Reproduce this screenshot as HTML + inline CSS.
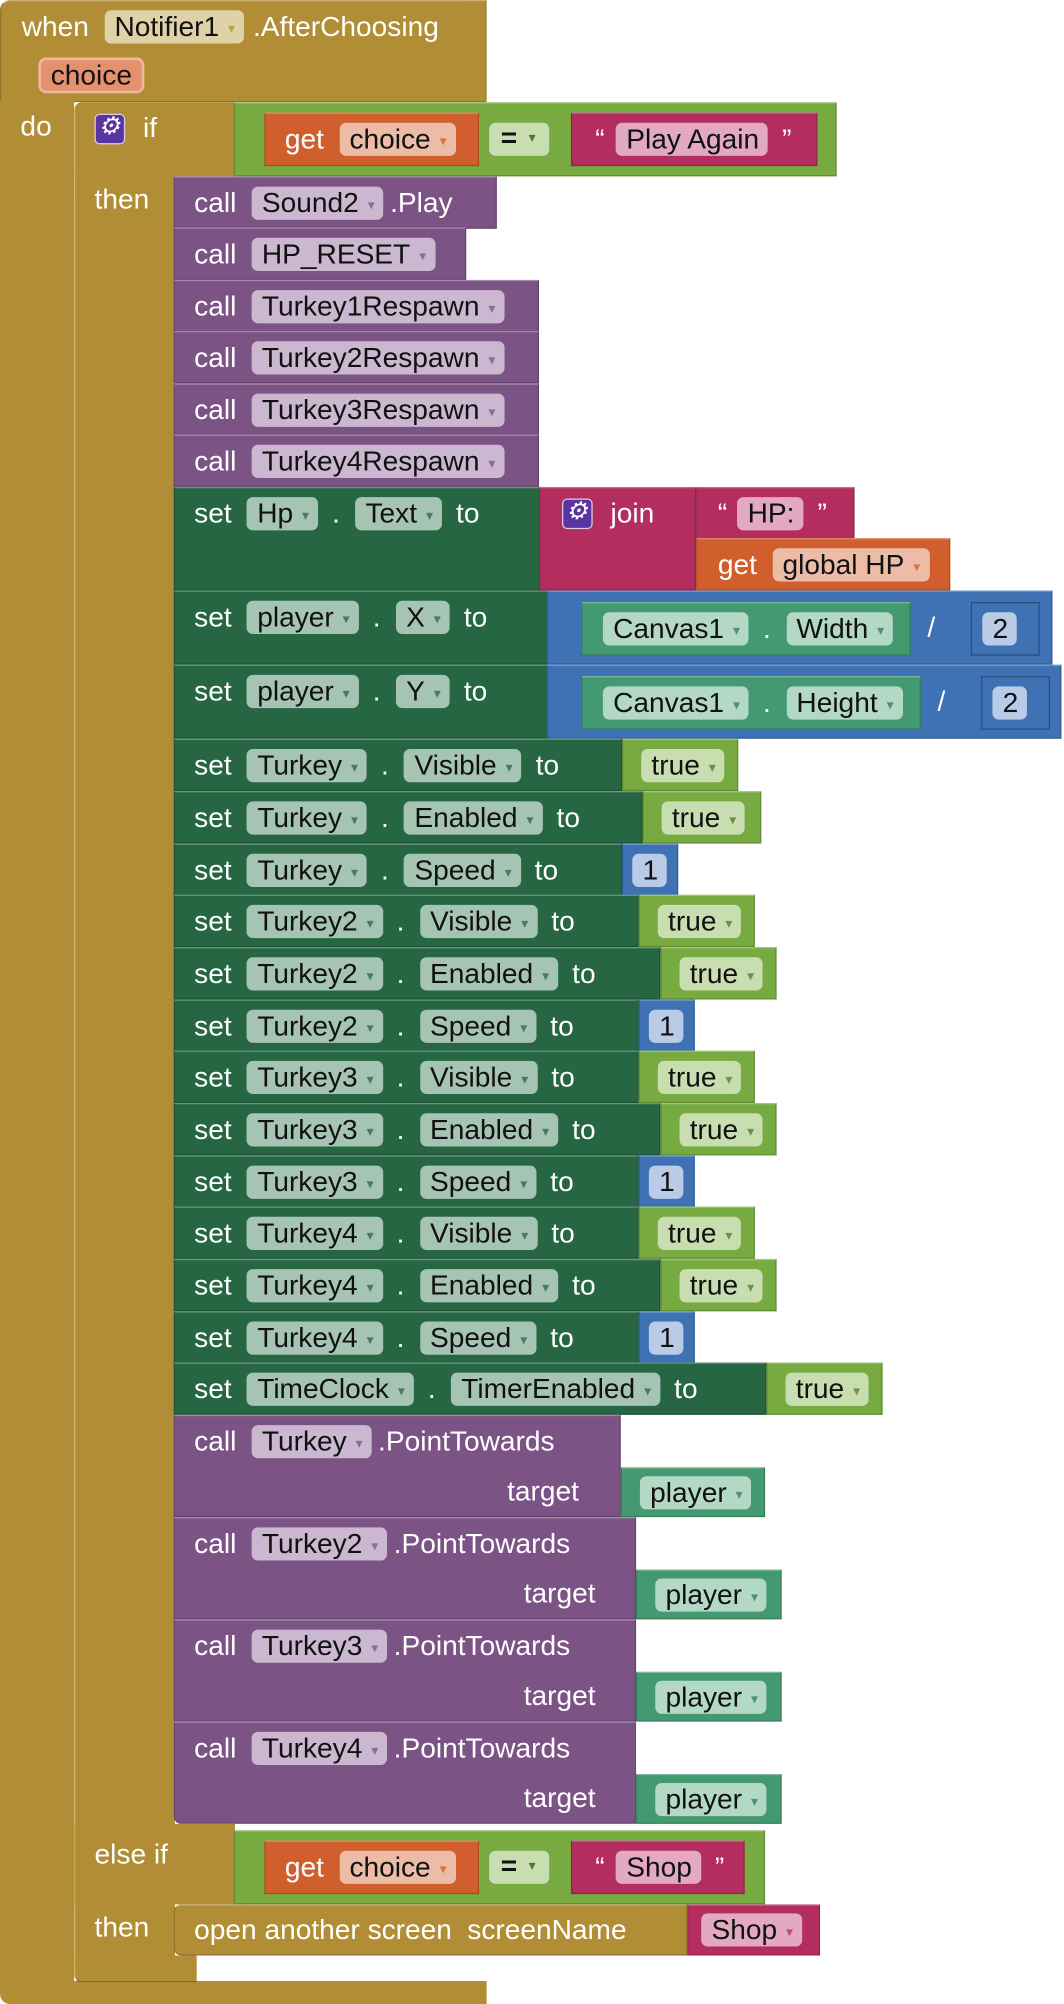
<!DOCTYPE html>
<html><head><meta charset="utf-8">
<style>
html,body{margin:0;padding:0;background:#fff;overflow:hidden}
#w{position:absolute;left:0;top:0;width:833px;height:1568px;transform:scale(1.2773,1.2781);transform-origin:0 0}
.b{position:absolute;display:flex;align-items:flex-start;box-sizing:border-box;padding-left:15px;padding-top:7px;color:#fff;font:22px/26px "Liberation Sans",sans-serif;white-space:nowrap;border:1px solid rgba(0,0,0,.18);border-top-color:rgba(255,255,255,.3)}
.b>span{margin-right:12px}
.f{font-style:normal;display:inline-block;height:26px;line-height:26px;padding:0 7px 0 8px;border-radius:5px;background:rgba(255,255,255,.6);color:#111;margin-right:11px}
.f u{text-decoration:none;font-size:11px;margin-left:7px;vertical-align:2px;opacity:.75}
.s{background:#266643}.s .f{background:#a6c4b3}.s .f u{color:#266643}
.c{background:#7c5385}.c .f{background:#cbb7cf}.c .f u{color:#7c5385}
.lg{background:#77ab41}.lg .f{background:#c8deb0}.lg .f u{color:#4c7a20}
.tx{background:#b32d5e}
.gt{background:#d05f2d}.gt .f{background:#ecbca6}.gt .f u{color:#d05f2d}
.bl{background:#3f71b5}
.tl{background:#439970}.tl .f{background:#b3d8c5}.tl .f u{color:#2f7a55}
.gd{background:#b18e35}
.st{left:136px;height:41px}
.gear{display:inline-block;width:24px;height:24px;background:#5b34a4;border:1px solid #d8cde8;border-radius:4px;box-sizing:border-box;margin-right:14px;position:relative;margin-top:1px}
.gear:after{content:"⚙";position:absolute;left:2px;top:-1px;font-size:19px;line-height:22px;color:#fff}
.lbl{position:absolute;color:#fff;font:22px/26px 'Liberation Sans',sans-serif}
</style></head><body><div id="w">

<div class="b gd" style="left:0;top:0;width:381px;height:80px;border-radius:8px 0 0 0;padding-left:16px;padding-top:7px"><span>when</span><i class="f" style="background:#e0d2a7">Notifier1<u style="color:#b18e35">▾</u></i><span style="margin-left:-4px">.AfterChoosing</span></div>
<div style="position:absolute;left:30px;top:45px;width:83px;height:28px;box-sizing:border-box;background:#e5916f;border:2px solid #efb89c;border-radius:6px;font:22px/24px 'Liberation Sans',sans-serif;color:#111;text-align:center">choice</div>
<div class="gd" style="position:absolute;left:0;top:79px;width:58px;height:1480px;border-radius:0 0 0 8px"></div>
<div class="gd" style="position:absolute;left:0;top:1550px;width:381px;height:18px;border-radius:0 0 0 8px"></div>
<div class="lbl" style="left:16px;top:86px">do</div>

<div class="gd" style="position:absolute;left:58px;top:80px;width:125px;height:58px;border-left:1px solid #c9a95a;border-radius:6px 0 0 0"></div>
<div class="gd" style="position:absolute;left:58px;top:137px;width:78px;height:1410px;border-left:1px solid #c9a95a;border-radius:0 0 0 6px"></div>
<div class="gd" style="position:absolute;left:58px;top:1427px;width:125px;height:63px;border-left:1px solid #c9a95a"></div>
<div class="gd" style="position:absolute;left:58px;top:1530px;width:95px;height:20px;border-left:1px solid #c9a95a;border-bottom:1px solid #8c6d20;border-radius:0 0 0 6px"></div>
<div style="position:absolute;left:74px;top:87px;display:flex;align-items:center;color:#fff;font:22px/26px 'Liberation Sans',sans-serif"><i class="gear"></i>if</div>
<div class="lbl" style="left:74px;top:143px">then</div>
<div class="lbl" style="left:74px;top:1438px">else if</div>
<div class="lbl" style="left:74px;top:1495px">then</div>

<div class="b lg" style="left:183px;top:80px;width:472px;height:58px"></div>
<div class="b gt" style="left:207px;top:88px;width:168px;height:42px;padding-top:7px"><span>get</span><i class="f">choice<u>▾</u></i></div>
<div class="b" style="left:383px;top:96px;width:47px;height:26px;border:0;padding:0 0 0 9px;background:#c8deb0;border-radius:5px;color:#111;font-weight:bold;line-height:24px">=<span style="font-size:11px;font-weight:normal;color:#4c7a20;margin-left:9px">▾</span></div>
<div class="b tx" style="left:447px;top:88px;width:193px;height:42px;padding-top:7px;padding-left:18px"><span style="margin-right:9px">“</span><i class="f" style="background:#e2a9c0">Play Again</i><span>”</span></div>

<div class="b c st" style="top:138px;width:253px"><span>call</span><i class="f">Sound2<u>▾</u></i><span style="margin-left:-6px">.Play</span></div>
<div class="b c st" style="top:178px;width:229px"><span>call</span><i class="f">HP_RESET<u>▾</u></i></div>
<div class="b c st" style="top:219px;width:286px"><span>call</span><i class="f">Turkey1Respawn<u>▾</u></i></div>
<div class="b c st" style="top:259px;width:286px"><span>call</span><i class="f">Turkey2Respawn<u>▾</u></i></div>
<div class="b c st" style="top:300px;width:286px"><span>call</span><i class="f">Turkey3Respawn<u>▾</u></i></div>
<div class="b c st" style="top:340px;width:286px"><span>call</span><i class="f">Turkey4Respawn<u>▾</u></i></div>

<div class="b s st" style="top:381px;width:288px;height:81px"><span>set</span><i class="f">Hp<u>▾</u></i><span>.</span><i class="f">Text<u>▾</u></i><span>to</span></div>
<div class="b tx" style="left:422px;top:381px;width:123px;height:81px;padding-left:17px;padding-top:7px"><i class="gear"></i><span>join</span></div>
<div class="b tx" style="left:545px;top:381px;width:124px;height:41px;padding-left:16px"><span style="margin-right:8px">“</span><i class="f" style="background:#e2a9c0">HP:</i><span>”</span></div>
<div class="b gt" style="left:545px;top:421px;width:199px;height:41px;padding-left:16px"><span>get</span><i class="f">global HP<u>▾</u></i></div>

<div class="b s st" style="top:462px;width:293px;height:58px"><span>set</span><i class="f">player<u>▾</u></i><span>.</span><i class="f">X<u>▾</u></i><span>to</span></div>
<div class="b bl" style="left:428px;top:462px;width:396px;height:58px"></div>
<div class="b tl" style="left:455px;top:471px;width:258px;height:42px;padding-left:16px;padding-top:7px"><i class="f">Canvas1<u>▾</u></i><span>.</span><i class="f">Width<u>▾</u></i></div>
<div class="lbl" style="left:726px;top:478px">/</div>
<div class="b bl" style="left:760px;top:471px;width:54px;height:42px;padding-left:8px;border-color:rgba(0,0,0,.3)"><i class="f" style="background:#b9cbe6">2</i></div>

<div class="b s st" style="top:520px;width:293px;height:58px"><span>set</span><i class="f">player<u>▾</u></i><span>.</span><i class="f">Y<u>▾</u></i><span>to</span></div>
<div class="b bl" style="left:428px;top:520px;width:403px;height:58px"></div>
<div class="b tl" style="left:455px;top:529px;width:266px;height:42px;padding-left:16px;padding-top:7px"><i class="f">Canvas1<u>▾</u></i><span>.</span><i class="f">Height<u>▾</u></i></div>
<div class="lbl" style="left:734px;top:536px">/</div>
<div class="b bl" style="left:768px;top:529px;width:54px;height:42px;padding-left:8px;border-color:rgba(0,0,0,.3)"><i class="f" style="background:#b9cbe6">2</i></div>

<div class="b s st" style="top:578px;width:351px"><span>set</span><i class="f">Turkey<u>▾</u></i><span>.</span><i class="f">Visible<u>▾</u></i><span>to</span></div>
<div class="b lg" style="left:487px;top:578px;width:91px;height:41px;padding-left:14px"><i class="f">true<u>▾</u></i></div>
<div class="b s st" style="top:619px;width:367px"><span>set</span><i class="f">Turkey<u>▾</u></i><span>.</span><i class="f">Enabled<u>▾</u></i><span>to</span></div>
<div class="b lg" style="left:503px;top:619px;width:93px;height:41px;padding-left:14px"><i class="f">true<u>▾</u></i></div>
<div class="b s st" style="top:660px;width:351px"><span>set</span><i class="f">Turkey<u>▾</u></i><span>.</span><i class="f">Speed<u>▾</u></i><span>to</span></div>
<div class="b bl" style="left:487px;top:660px;width:44px;height:41px;padding-left:7px"><i class="f" style="background:#b9cbe6">1</i></div>

<div class="b s st" style="top:700px;width:364px"><span>set</span><i class="f">Turkey2<u>▾</u></i><span>.</span><i class="f">Visible<u>▾</u></i><span>to</span></div>
<div class="b lg" style="left:500px;top:700px;width:91px;height:41px;padding-left:14px"><i class="f">true<u>▾</u></i></div>
<div class="b s st" style="top:741px;width:381px"><span>set</span><i class="f">Turkey2<u>▾</u></i><span>.</span><i class="f">Enabled<u>▾</u></i><span>to</span></div>
<div class="b lg" style="left:517px;top:741px;width:91px;height:41px;padding-left:14px"><i class="f">true<u>▾</u></i></div>
<div class="b s st" style="top:782px;width:364px"><span>set</span><i class="f">Turkey2<u>▾</u></i><span>.</span><i class="f">Speed<u>▾</u></i><span>to</span></div>
<div class="b bl" style="left:500px;top:782px;width:44px;height:41px;padding-left:7px"><i class="f" style="background:#b9cbe6">1</i></div>

<div class="b s st" style="top:822px;width:364px"><span>set</span><i class="f">Turkey3<u>▾</u></i><span>.</span><i class="f">Visible<u>▾</u></i><span>to</span></div>
<div class="b lg" style="left:500px;top:822px;width:91px;height:41px;padding-left:14px"><i class="f">true<u>▾</u></i></div>
<div class="b s st" style="top:863px;width:381px"><span>set</span><i class="f">Turkey3<u>▾</u></i><span>.</span><i class="f">Enabled<u>▾</u></i><span>to</span></div>
<div class="b lg" style="left:517px;top:863px;width:91px;height:41px;padding-left:14px"><i class="f">true<u>▾</u></i></div>
<div class="b s st" style="top:904px;width:364px"><span>set</span><i class="f">Turkey3<u>▾</u></i><span>.</span><i class="f">Speed<u>▾</u></i><span>to</span></div>
<div class="b bl" style="left:500px;top:904px;width:44px;height:41px;padding-left:7px"><i class="f" style="background:#b9cbe6">1</i></div>

<div class="b s st" style="top:944px;width:364px"><span>set</span><i class="f">Turkey4<u>▾</u></i><span>.</span><i class="f">Visible<u>▾</u></i><span>to</span></div>
<div class="b lg" style="left:500px;top:944px;width:91px;height:41px;padding-left:14px"><i class="f">true<u>▾</u></i></div>
<div class="b s st" style="top:985px;width:381px"><span>set</span><i class="f">Turkey4<u>▾</u></i><span>.</span><i class="f">Enabled<u>▾</u></i><span>to</span></div>
<div class="b lg" style="left:517px;top:985px;width:91px;height:41px;padding-left:14px"><i class="f">true<u>▾</u></i></div>
<div class="b s st" style="top:1026px;width:364px"><span>set</span><i class="f">Turkey4<u>▾</u></i><span>.</span><i class="f">Speed<u>▾</u></i><span>to</span></div>
<div class="b bl" style="left:500px;top:1026px;width:44px;height:41px;padding-left:7px"><i class="f" style="background:#b9cbe6">1</i></div>

<div class="b s st" style="top:1066px;width:464px"><span>set</span><i class="f">TimeClock<u>▾</u></i><span>.</span><i class="f">TimerEnabled<u>▾</u></i><span>to</span></div>
<div class="b lg" style="left:600px;top:1066px;width:91px;height:41px;padding-left:14px"><i class="f">true<u>▾</u></i></div>

<div class="b c st" style="top:1107px;width:350px;height:80px"><span>call</span><i class="f">Turkey<u>▾</u></i><span style="margin-left:-6px">.PointTowards</span></div>
<div class="lbl" style="left:397px;top:1154px">target</div>
<div class="b tl" style="left:486px;top:1148px;width:113px;height:39px;padding-top:6px;padding-left:14px"><i class="f">player<u>▾</u></i></div>

<div class="b c st" style="top:1187px;width:362px;height:80px"><span>call</span><i class="f">Turkey2<u>▾</u></i><span style="margin-left:-6px">.PointTowards</span></div>
<div class="lbl" style="left:410px;top:1234px">target</div>
<div class="b tl" style="left:498px;top:1228px;width:114px;height:39px;padding-top:6px;padding-left:14px"><i class="f">player<u>▾</u></i></div>

<div class="b c st" style="top:1267px;width:362px;height:80px"><span>call</span><i class="f">Turkey3<u>▾</u></i><span style="margin-left:-6px">.PointTowards</span></div>
<div class="lbl" style="left:410px;top:1314px">target</div>
<div class="b tl" style="left:498px;top:1308px;width:114px;height:39px;padding-top:6px;padding-left:14px"><i class="f">player<u>▾</u></i></div>

<div class="b c st" style="top:1347px;width:362px;height:80px;border-radius:0 0 0 6px"><span>call</span><i class="f">Turkey4<u>▾</u></i><span style="margin-left:-6px">.PointTowards</span></div>
<div class="lbl" style="left:410px;top:1394px">target</div>
<div class="b tl" style="left:498px;top:1388px;width:114px;height:39px;padding-top:6px;padding-left:14px"><i class="f">player<u>▾</u></i></div>

<div class="b lg" style="left:183px;top:1432px;width:416px;height:58px"></div>
<div class="b gt" style="left:207px;top:1440px;width:168px;height:42px;padding-top:7px"><span>get</span><i class="f">choice<u>▾</u></i></div>
<div class="b" style="left:383px;top:1448px;width:47px;height:26px;border:0;padding:0 0 0 9px;background:#c8deb0;border-radius:5px;color:#111;font-weight:bold;line-height:24px">=<span style="font-size:11px;font-weight:normal;color:#4c7a20;margin-left:9px">▾</span></div>
<div class="b tx" style="left:447px;top:1440px;width:136px;height:42px;padding-top:7px;padding-left:18px"><span style="margin-right:9px">“</span><i class="f" style="background:#e2a9c0">Shop</i><span>”</span></div>

<div class="b gd st" style="top:1490px;width:402px;height:40px;border-radius:6px 0 0 6px;padding-top:6px"><span>open another screen</span><span>screenName</span></div>
<div class="b tx" style="left:538px;top:1490px;width:104px;height:40px;padding-top:6px;padding-left:10px"><i class="f" style="background:#e2a9c0">Shop<u style="color:#b32d5e">▾</u></i></div>

</div></body></html>
